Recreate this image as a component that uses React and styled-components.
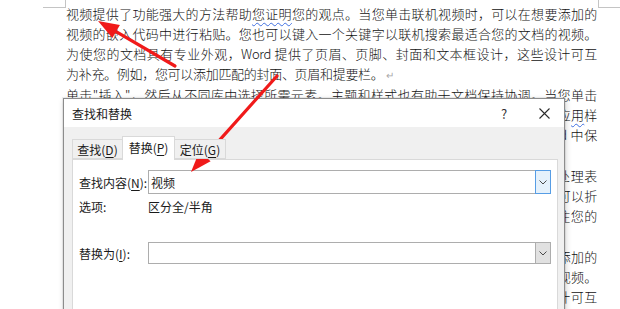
import React from 'react';
import styled, { createGlobalStyle } from 'styled-components';

const Global = createGlobalStyle`
  html, body { margin: 0; padding: 0; background: #fff; }
  body { width: 620px; height: 309px; overflow: hidden; }
`;

const Page = styled.div`
  position: relative;
  width: 620px;
  height: 309px;
  overflow: hidden;
  background: #fff;
`;

const TextArea = styled.div`
  position: relative;
  margin-left: 66px;
  padding-top: 4px;
  width: 531px;
  font-family: "Noto Sans CJK SC", sans-serif;
  font-weight: 300;
  font-size: 13px;
  line-height: 20px;
  color: #111;
  &::before {
    content: "";
    position: absolute;
    left: -23px;
    top: 0;
    width: 22px;
    height: 7px;
    border-right: 1px solid #c4c4c4;
    border-bottom: 1px solid #c4c4c4;
  }
  &::after {
    content: "";
    position: absolute;
    right: -24px;
    top: 0;
    width: 22px;
    height: 7px;
    border-left: 1px solid #c4c4c4;
    border-bottom: 1px solid #c4c4c4;
  }
`;

const Line = styled.div`
  white-space: nowrap;
  letter-spacing: -0.3px;
  text-align: ${p => (p.$end ? 'left' : 'justify')};
  text-align-last: ${p => (p.$end ? 'left' : 'justify')};
`;

const Wavy = styled.span`
  text-decoration: underline wavy #3f6fe0;
  text-decoration-thickness: 1px;
  text-underline-offset: 3px;
`;

const ParaMark = styled.span`
  color: #a8a8a8;
  font-size: 10px;
  margin-left: 2px;
`;

const Dialog = styled.div`
  position: absolute;
  left: 63px;
  top: 98px;
  width: 502px;
  height: 230px;
  box-sizing: border-box;
  background: #f0f0f0;
  border: 1px solid #8c8c8c;
  box-shadow: 0 0 0 1px rgba(0, 0, 0, 0.06), 1px 2px 6px rgba(0, 0, 0, 0.18);
  display: flex;
  flex-direction: column;
  font-family: "Noto Sans CJK SC", sans-serif;
  font-size: 12px;
  color: #1a1a1a;
`;

const TitleBar = styled.div`
  height: 28px;
  flex: none;
  background: #fff;
  display: flex;
  align-items: center;
  padding-left: 8px;
`;

const Title = styled.div`
  flex: 1;
`;

const TitleButton = styled.div`
  width: 40px;
  height: 28px;
  display: flex;
  align-items: center;
  justify-content: center;
  font-size: 13px;
  color: #333;
`;

const Body = styled.div`
  flex: 1;
  display: flex;
  flex-direction: column;
  padding: 8px 6px 0 8px;
`;

const Tabs = styled.div`
  display: flex;
  align-items: flex-end;
  height: 24px;
  position: relative;
  z-index: 1;
`;

const Tab = styled.div`
  box-sizing: border-box;
  width: ${p => p.$w}px;
  height: ${p => (p.$active ? 24 : 20)}px;
  margin-bottom: ${p => (p.$active ? -1 : 0)}px;
  margin-left: ${p => (p.$first ? 0 : -1)}px;
  border: 1px solid #d9d9d9;
  border-bottom: ${p => (p.$active ? 'none' : '1px solid #d9d9d9')};
  background: ${p => (p.$active ? '#fff' : '#f0f0f0')};
  display: flex;
  align-items: center;
  justify-content: center;
  padding-bottom: ${p => (p.$active ? 2 : 0)}px;
  position: relative;
  z-index: ${p => (p.$active ? 2 : 1)};
`;

const Key = styled.span`
  text-decoration: underline;
  text-underline-offset: 2px;
`;

const Panel = styled.div`
  flex: 1;
  background: #fff;
  border: 1px solid #d9d9d9;
  padding: 10px 6px 0 6px;
  display: flex;
  flex-direction: column;
`;

const FieldRow = styled.div`
  display: grid;
  grid-template-columns: 69px 1fr;
  align-items: center;
  margin-top: ${p => p.$mt || 0}px;
`;

const Label = styled.div`
  white-space: nowrap;
`;

const Combo = styled.div`
  box-sizing: border-box;
  height: ${p => p.$h}px;
  border: 1px solid #adadad;
  background: #fff;
  display: flex;
`;

const ComboText = styled.div`
  flex: 1;
  padding-left: 2px;
  display: flex;
  align-items: center;
`;

const DropButton = styled.div`
  box-sizing: border-box;
  width: 16px;
  margin: -1px -1px -1px 0;
  border: 1px solid ${p => (p.$focus ? '#569de5' : '#adadad')};
  background: ${p => (p.$focus ? '#e5f1fb' : '#e1e1e1')};
  display: flex;
  align-items: center;
  justify-content: center;
`;

const OptionRow = styled.div`
  display: grid;
  grid-template-columns: 69px 1fr;
  height: 16px;
  align-items: center;
  margin-top: 4px;
`;

const Overlay = styled.svg`
  position: absolute;
  left: 0;
  top: 0;
  width: 620px;
  height: 309px;
  pointer-events: none;
`;

const Chevron = () => (
  <svg width="8" height="5" viewBox="0 0 8 5">
    <path d="M0.5 0.5 L4 4 L7.5 0.5" fill="none" stroke="#4a4a4a" strokeWidth="1" />
  </svg>
);

const Close = () => (
  <svg width="11" height="11" viewBox="0 0 11 11">
    <path d="M0.5 0.5 L10.5 10.5 M10.5 0.5 L0.5 10.5" stroke="#2b2b2b" strokeWidth="1.1" />
  </svg>
);

function Arrow({ tail, tip, len = 21, half = 7.5, color = '#f01a1a' }) {
  const dx = tip[0] - tail[0];
  const dy = tip[1] - tail[1];
  const L = Math.hypot(dx, dy);
  const ux = dx / L;
  const uy = dy / L;
  const bx = tip[0] - ux * len;
  const by = tip[1] - uy * len;
  const nx = -uy;
  const ny = ux;
  const p1 = `${bx + nx * half},${by + ny * half}`;
  const p2 = `${bx - nx * half},${by - ny * half}`;
  const lx = tip[0] - ux * (len - 4);
  const ly = tip[1] - uy * (len - 4);
  return (
    <g>
      <line x1={tail[0]} y1={tail[1]} x2={lx} y2={ly} stroke={color} strokeWidth="3.2" strokeLinecap="round" />
      <polygon points={`${tip[0]},${tip[1]} ${p1} ${p2}`} fill={color} />
    </g>
  );
}

const lines = [
  { t: <>视频提供了功能强大的方法帮助<Wavy>您证明</Wavy>您的观点。当您单击联机视频时，可以在想要添加的</> },
  { t: '视频的嵌入代码中进行粘贴。您也可以键入一个关键字以联机搜索最适合您的文档的视频。' },
  { t: '为使您的文档具有专业外观，Word 提供了页眉、页脚、封面和文本框设计，这些设计可互' },
  { t: <>为补充。例如，您可以添加匹配的封面、页眉和提要栏。<ParaMark>↵</ParaMark></>, end: true },
  { t: '单击"插入"，然后从不同库中选择所需元素。主题和样式也有助于文档保持协调。当您单击' },
  { t: <>"设计"并选择新的主题时，图片、图表或 SmartArt 图形将会更改以匹配新的主题。当应<Wavy>用</Wavy>样</> },
  { t: '式时，您的标题会进行更改以匹配新的主题。使用在需要位置出现的新按钮在 Word 中保' },
  { t: <>存时间。<ParaMark>↵</ParaMark></>, end: true },
  { t: '若要更改图片适应文档的方式，请单击该图片，图片旁边会显示布局选项按钮。当处理表' },
  { t: '格时，单击要添加行或列的位置，然后单击加号。在新的阅读视图中阅读更加容易。可以折' },
  { t: '叠文档某些部分并关注所需文本。如果在达到结尾处之前需要停止读取，Word 会记住您的' },
  { t: <>停止位置 - 即使在另一个设备上。<ParaMark>↵</ParaMark></>, end: true },
  { t: '视频提供了功能强大的方法帮助您证明您的观点。当您单击联机视频时，可以在想要添加的' },
  { t: '视频的嵌入代码中进行粘贴。您也可以键入一个关键字以联机搜索最适合您的文档的视频。' },
  { t: '为使您的文档具有专业外观，Word 提供了页眉、页脚、封面和文本框设计，这些设计可互' },
];

export default function App() {
  return (
    <Page>
      <Global />
      <TextArea>
        {lines.map((l, i) => (
          <Line key={i} $end={l.end}>{l.t}</Line>
        ))}
      </TextArea>

      <Dialog>
        <TitleBar>
          <Title>查找和替换</Title>
          <TitleButton>?</TitleButton>
          <TitleButton><Close /></TitleButton>
        </TitleBar>
        <Body>
          <Tabs>
            <Tab $first $w={51}>查找(<Key>D</Key>)</Tab>
            <Tab $active $w={53}>替换(<Key>P</Key>)</Tab>
            <Tab $w={52}>定位(<Key>G</Key>)</Tab>
          </Tabs>
          <Panel>
            <FieldRow>
              <Label>查找内容(<Key>N</Key>):</Label>
              <Combo $h={24}>
                <ComboText>视频</ComboText>
                <DropButton $focus><Chevron /></DropButton>
              </Combo>
            </FieldRow>
            <OptionRow>
              <Label>选项:</Label>
              <div>区分全/半角</div>
            </OptionRow>
            <FieldRow $mt={28}>
              <Label>替换为(<Key>I</Key>):</Label>
              <Combo $h={22}>
                <ComboText />
                <DropButton><Chevron /></DropButton>
              </Combo>
            </FieldRow>
          </Panel>
        </Body>
      </Dialog>

      <Overlay viewBox="0 0 620 309">
        <Arrow tail={[175, 66]} tip={[98, 21]} />
        <Arrow tail={[277, 76]} tip={[191, 172]} />
      </Overlay>
    </Page>
  );
}
